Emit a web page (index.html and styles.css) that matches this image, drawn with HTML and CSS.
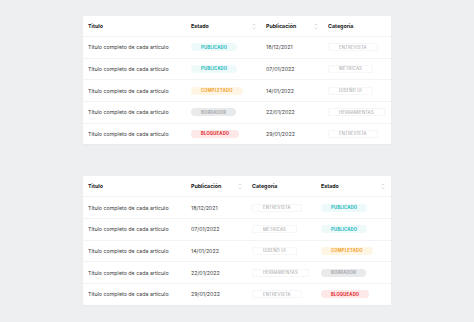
FILE: index.html
```html
<!DOCTYPE html>
<html lang="es">
<head>
<meta charset="utf-8">
<title>Tablas</title>
<link rel="stylesheet" href="styles.css">
</head>
<body>
<main class="page">
  <section class="table t1">
    <div class="row head">
      <div class="cell">Titulo</div>
      <div class="cell sort">Estado <svg class="sort-ic" viewBox="0 0 4 7"><path d="M0.7 2.4 L2 1 L3.3 2.4 M0.7 4.6 L2 6 L3.3 4.6"/></svg></div>
      <div class="cell sort">Publicación <svg class="sort-ic" viewBox="0 0 4 7"><path d="M0.7 2.4 L2 1 L3.3 2.4 M0.7 4.6 L2 6 L3.3 4.6"/></svg></div>
      <div class="cell">Categoria</div>
    </div>
    <div class="row">
      <div class="cell">Título completo de cada artículo</div>
      <div class="cell"><span class="badge pub">PUBLICADO</span></div>
      <div class="cell date">18/12/2021</div>
      <div class="cell"><span class="tag">ENTREVISTA</span></div>
    </div>
    <div class="row">
      <div class="cell">Título completo de cada artículo</div>
      <div class="cell"><span class="badge pub">PUBLICADO</span></div>
      <div class="cell date">07/01/2022</div>
      <div class="cell"><span class="tag">MÉTRICAS</span></div>
    </div>
    <div class="row">
      <div class="cell">Título completo de cada artículo</div>
      <div class="cell"><span class="badge comp">COMPLETADO</span></div>
      <div class="cell date">14/01/2022</div>
      <div class="cell"><span class="tag">DISEÑO UI</span></div>
    </div>
    <div class="row">
      <div class="cell">Título completo de cada artículo</div>
      <div class="cell"><span class="badge borr">BORRADOR</span></div>
      <div class="cell date">22/01/2022</div>
      <div class="cell"><span class="tag">HERRAMIENTAS</span></div>
    </div>
    <div class="row">
      <div class="cell">Título completo de cada artículo</div>
      <div class="cell"><span class="badge bloq">BLOQUEADO</span></div>
      <div class="cell date">29/01/2022</div>
      <div class="cell"><span class="tag">ENTREVISTA</span></div>
    </div>
  </section>

  <section class="table t2">
    <div class="row head">
      <div class="cell">Titulo</div>
      <div class="cell sort">Publicación <svg class="sort-ic" viewBox="0 0 4 7"><path d="M0.7 2.4 L2 1 L3.3 2.4 M0.7 4.6 L2 6 L3.3 4.6"/></svg></div>
      <div class="cell">Categoría</div>
      <div class="cell sort last">Estado <svg class="sort-ic" viewBox="0 0 4 7"><path d="M0.7 2.4 L2 1 L3.3 2.4 M0.7 4.6 L2 6 L3.3 4.6"/></svg></div>
    </div>
    <div class="row">
      <div class="cell">Título completo de cada artículo</div>
      <div class="cell date">18/12/2021</div>
      <div class="cell"><span class="tag">ENTREVISTA</span></div>
      <div class="cell"><span class="badge pub">PUBLICADO</span></div>
    </div>
    <div class="row">
      <div class="cell">Título completo de cada artículo</div>
      <div class="cell date">07/01/2022</div>
      <div class="cell"><span class="tag">MÉTRICAS</span></div>
      <div class="cell"><span class="badge pub">PUBLICADO</span></div>
    </div>
    <div class="row">
      <div class="cell">Título completo de cada artículo</div>
      <div class="cell date">14/01/2022</div>
      <div class="cell"><span class="tag">DISEÑO UI</span></div>
      <div class="cell"><span class="badge comp">COMPLETADO</span></div>
    </div>
    <div class="row">
      <div class="cell">Título completo de cada artículo</div>
      <div class="cell date">22/01/2022</div>
      <div class="cell"><span class="tag">HERRAMIENTAS</span></div>
      <div class="cell"><span class="badge borr">BORRADOR</span></div>
    </div>
    <div class="row">
      <div class="cell">Título completo de cada artículo</div>
      <div class="cell date">29/01/2022</div>
      <div class="cell"><span class="tag">ENTREVISTA</span></div>
      <div class="cell"><span class="badge bloq">BLOQUEADO</span></div>
    </div>
  </section>
</main>
</body>
</html>
```

FILE: styles.css
```css
html, body {
  margin: 0;
  padding: 0;
  background: #eeeff1;
}
body {
  font-family: Inter, "Noto Sans", sans-serif;
  color: #333;
  width: 474px;
  height: 322px;
  overflow: hidden;
}
.page {
  display: flex;
  flex-direction: column;
  gap: 32px;
  padding: 16px 0 0 83px;
}
.table {
  width: 308px;
  background: #fff;
  box-shadow: 0 1px 2px rgba(0, 0, 0, 0.03);
}
.row {
  display: grid;
  align-items: center;
  height: 21.66px;
  padding: 0 5px;
  border-bottom: 1px solid #f2f3f5;
  box-sizing: border-box;
  font-size: 5.3px;
  color: #3a3a3a;
}
.row:last-child { border-bottom: none; height: 20.66px; }
.row.head {
  height: 21px;
  font-weight: 700;
  color: #1a1a1a;
}
.t1 .row { grid-template-columns: 103px 75px 62px 1fr; }
.t2 .row { grid-template-columns: 103px 61px 69px 1fr; }
.cell {
  white-space: nowrap;
  min-width: 0;
}
.cell.sort {
  display: flex;
  align-items: center;
  justify-content: space-between;
  padding-right: 10.5px;
}
.cell.sort.last { padding-right: 1px; }
.sort-ic {
  width: 4px;
  height: 7px;
  fill: none;
  stroke: #c6c8cc;
  stroke-width: 0.6;
}
.date { color: #3d3d3d; }
.badge, .tag {
  display: inline-flex;
  align-items: center;
  height: 8px;
  padding: 0 10px;
  border-radius: 4px;
  font-size: 4.2px;
  letter-spacing: 0.2px;
  box-sizing: border-box;
}
.badge { font-weight: 700; }
.tag {
  border: 1px solid #f6f6f8;
  color: #a0a2a6;
  font-weight: 400;
  border-radius: 2px;
}
.pub { background: #eefafa; color: #22b8bc; }
.comp { background: #fff5e5; color: #f3a42a; }
.borr { background: #e9eaec; color: #a6a8ac; }
.bloq { background: #fde7e7; color: #e2272b; }
```
